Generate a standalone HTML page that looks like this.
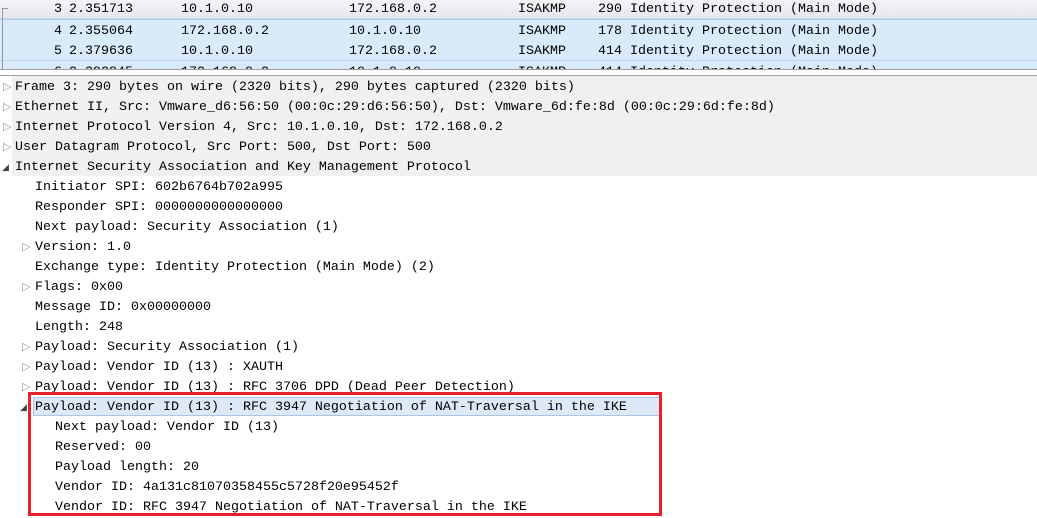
<!DOCTYPE html><html><head><style>
body{margin:0;width:1037px;height:517px;overflow:hidden;background:#fff;font-family:"Liberation Mono",monospace;font-size:13.33px;color:#000;position:relative}
.r{position:absolute;left:0;width:1037px;height:20px;line-height:20px;white-space:pre}
.p span{position:absolute;top:2px}
.t{position:absolute;white-space:pre;line-height:20px;margin-top:2px}
.tri{position:absolute;font-size:11px;color:#999;line-height:20px;margin-top:2px}
</style></head><body>
<div class="r p" style="top:-2px;background:linear-gradient(#f4f5f7,#e6e8ec);border-bottom:1px solid #c8d4e2">
<span style="left:54px">3</span><span style="left:69px">2.351713</span><span style="left:181px">10.1.0.10</span><span style="left:349px">172.168.0.2</span><span style="left:518px">ISAKMP</span><span style="left:598px">290 Identity Protection (Main Mode)</span></div>
<div class="r p" style="top:19px;background:#d9eafb;border-top:1px solid #a8cdf0;border-bottom:1px solid #bcd8f2">
<span style="left:54px">4</span><span style="left:69px">2.355064</span><span style="left:181px">172.168.0.2</span><span style="left:349px">10.1.0.10</span><span style="left:518px">ISAKMP</span><span style="left:598px">178 Identity Protection (Main Mode)</span></div>
<div class="r p" style="top:40px;background:#d9eafb;border-bottom:1px solid #bcd8f2">
<span style="left:54px">5</span><span style="left:69px">2.379636</span><span style="left:181px">10.1.0.10</span><span style="left:349px">172.168.0.2</span><span style="left:518px">ISAKMP</span><span style="left:598px">414 Identity Protection (Main Mode)</span></div>
<div style="position:absolute;top:61px;left:0;width:1037px;height:8px;overflow:hidden;background:#d9eafb">
<div class="r p" style="top:0"><span style="left:54px">6</span><span style="left:69px">2.392845</span><span style="left:181px">172.168.0.2</span><span style="left:349px">10.1.0.10</span><span style="left:518px">ISAKMP</span><span style="left:598px">414 Identity Protection (Main Mode)</span></div></div>
<div style="position:absolute;left:2px;top:8px;width:1px;height:61px;background:#999"></div>
<div style="position:absolute;left:2px;top:8px;width:6px;height:1px;background:#999"></div>
<div style="position:absolute;top:69px;left:0;width:1037px;height:1px;background:#a0a0a0"></div>
<div style="position:absolute;top:70px;left:0;width:1037px;height:5px;background:#fff"></div>
<div style="position:absolute;top:75px;left:0;width:1037px;height:1px;background:#a0a0a0"></div>
<div style="position:absolute;top:76px;left:12px;width:1025px;height:100px;background:#f0f0f0"></div>

<div class="tri" style="left:3px;top:76px">▷</div><div class="t" style="left:15px;top:76px">Frame 3: 290 bytes on wire (2320 bits), 290 bytes captured (2320 bits)</div>
<div class="tri" style="left:3px;top:96px">▷</div><div class="t" style="left:15px;top:96px">Ethernet II, Src: Vmware_d6:56:50 (00:0c:29:d6:56:50), Dst: Vmware_6d:fe:8d (00:0c:29:6d:fe:8d)</div>
<div class="tri" style="left:3px;top:116px">▷</div><div class="t" style="left:15px;top:116px">Internet Protocol Version 4, Src: 10.1.0.10, Dst: 172.168.0.2</div>
<div class="tri" style="left:3px;top:136px">▷</div><div class="t" style="left:15px;top:136px">User Datagram Protocol, Src Port: 500, Dst Port: 500</div>
<div class="tri" style="left:2px;top:156px;color:#444;font-size:9px">◢</div><div class="t" style="left:15px;top:156px">Internet Security Association and Key Management Protocol</div>
<div class="t" style="left:35px;top:176px">Initiator SPI: 602b6764b702a995</div>
<div class="t" style="left:35px;top:196px">Responder SPI: 0000000000000000</div>
<div class="t" style="left:35px;top:216px">Next payload: Security Association (1)</div>
<div class="tri" style="left:22px;top:236px">▷</div><div class="t" style="left:35px;top:236px">Version: 1.0</div>
<div class="t" style="left:35px;top:256px">Exchange type: Identity Protection (Main Mode) (2)</div>
<div class="tri" style="left:22px;top:276px">▷</div><div class="t" style="left:35px;top:276px">Flags: 0x00</div>
<div class="t" style="left:35px;top:296px">Message ID: 0x00000000</div>
<div class="t" style="left:35px;top:316px">Length: 248</div>
<div class="tri" style="left:22px;top:336px">▷</div><div class="t" style="left:35px;top:336px">Payload: Security Association (1)</div>
<div class="tri" style="left:22px;top:356px">▷</div><div class="t" style="left:35px;top:356px">Payload: Vendor ID (13) : XAUTH</div>
<div class="tri" style="left:22px;top:376px">▷</div><div class="t" style="left:35px;top:376px">Payload: Vendor ID (13) : RFC 3706 DPD (Dead Peer Detection)</div>
<div style="position:absolute;left:33px;top:397px;width:627px;height:19px;background:#dde9f7;border:1px solid #a9c6ea;box-sizing:border-box"></div>
<div class="tri" style="left:20px;top:396px;color:#444;font-size:9px">◢</div><div class="t" style="left:35px;top:396px">Payload: Vendor ID (13) : RFC 3947 Negotiation of NAT-Traversal in the IKE</div>
<div class="t" style="left:55px;top:416px">Next payload: Vendor ID (13)</div>
<div class="t" style="left:55px;top:436px">Reserved: 00</div>
<div class="t" style="left:55px;top:456px">Payload length: 20</div>
<div class="t" style="left:55px;top:476px">Vendor ID: 4a131c81070358455c5728f20e95452f</div>
<div class="t" style="left:55px;top:496px">Vendor ID: RFC 3947 Negotiation of NAT-Traversal in the IKE</div>
<div style="position:absolute;left:28px;top:392px;width:634px;height:124px;border:3px solid #e8202a;box-sizing:border-box"></div>
</body></html>
